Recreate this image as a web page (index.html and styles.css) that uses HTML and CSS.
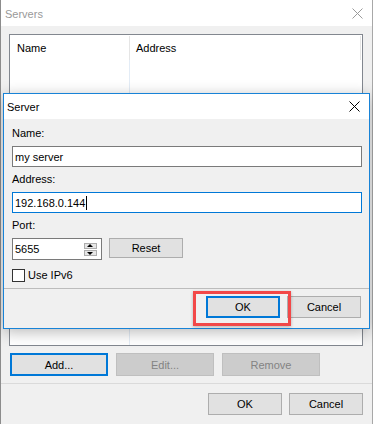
FILE: index.html
```html
<!DOCTYPE html>
<html lang="en">

<head>
    <meta charset="UTF-8">
    <title>Servers</title>
    <link rel="stylesheet" href="styles.css">
</head>

<body>

    <div class="window">
        <div class="titlebar inactive">
            <span class="title">Servers</span>
            <svg class="close" width="11" height="11" viewBox="0 0 11 11">
                <path d="M0.5 0.5 L10.5 10.5 M10.5 0.5 L0.5 10.5" stroke="#9a9a9a" stroke-width="1" fill="none" />
            </svg>
        </div>

        <div class="window-body">
            <div class="listview">
                <div class="list-header">
                    <div class="col col-name">Name</div>
                    <div class="col col-address">Address</div>
                    <div class="col col-rest"></div>
                </div>
                <div class="list-rows">
                    <div class="grid-name"></div>
                    <div class="grid-address"></div>
                </div>
            </div>

            <div class="button-row">
                <button class="btn wide focused">Add...</button>
                <button class="btn wide" disabled>Edit...</button>
                <button class="btn wide" disabled>Remove</button>
            </div>
        </div>

        <div class="window-footer">
            <button class="btn">OK</button>
            <button class="btn">Cancel</button>
        </div>
    </div>

    <!-- the "Server" dialog sits on top of the list window -->
    <div class="dialog">
        <div class="titlebar">
            <span class="title">Server</span>
            <svg class="close" width="11" height="11" viewBox="0 0 11 11">
                <path d="M0.5 0.5 L10.5 10.5 M10.5 0.5 L0.5 10.5" stroke="#000" stroke-width="1" fill="none" />
            </svg>
        </div>

        <div class="dialog-body">
            <div class="label">Name:</div>
            <div class="field">my server</div>

            <div class="label">Address:</div>
            <div class="field active">192.168.0.144<span class="caret"></span></div>

            <div class="label">Port:</div>
            <div class="port-row">
                <div class="field port">
                    <span class="port-value">5655</span>
                    <div class="spinner">
                        <span class="spin up"></span>
                        <span class="spin down"></span>
                    </div>
                </div>
                <button class="btn reset">Reset</button>
            </div>

            <label class="check-row">
                <span class="checkbox"></span>
                <span>Use IPv6</span>
            </label>
        </div>

        <div class="dialog-footer">
            <span class="highlight">
                <button class="btn focused">OK</button>
            </span>
            <button class="btn">Cancel</button>
        </div>
    </div>

</body>

</html>
```

FILE: styles.css
```css
* {
    box-sizing: border-box;
}

html,
body {
    margin: 0;
    padding: 0;
    width: 373px;
    height: 424px;
    overflow: hidden;
    font-family: "Liberation Sans", Arial, sans-serif;
    font-size: 11px;
    color: #000;
    background: #f0f0f0;
}

body {
    position: relative;
}

/* outer "Servers" window */
.window {
    width: 373px;
    height: 424px;
    border-left: 1px solid #8c8c8c;
    border-right: 1px solid #a8a8a8;
    background: #f0f0f0;
    display: flex;
    flex-direction: column;
}

.titlebar {
    height: 26px;
    background: #fff;
    display: flex;
    align-items: center;
    justify-content: space-between;
    padding: 0 9px 0 4px;
    flex-shrink: 0;
}

.titlebar .title {
    font-size: 11px;
    padding-top: 1px;
}

.titlebar.inactive .title {
    color: #999;
}

.window-body {
    padding: 8px 9px 0 8px;
    border-bottom: 1px solid #dadada;
}

.listview {
    height: 312px;
    border: 1px solid #82878f;
    background: #fff;
    display: flex;
    flex-direction: column;
}

.list-header {
    display: flex;
    height: 25px;
    padding-top: 1px;
}

.col {
    display: flex;
    align-items: center;
    padding-left: 7px;
}

.col-name {
    width: 120px;
    border-right: 1px solid #e5e5e5;
}

.col-address {
    width: 231px;
    border-right: 1px solid #e5e5e5;
    padding-left: 6px;
}

.col-rest {
    flex: 1;
    padding: 0;
}

.list-rows {
    flex: 1;
    display: flex;
}

.grid-name {
    width: 120px;
    border-right: 1px solid #e3ecf6;
}

.button-row {
    display: flex;
    gap: 8px;
    padding: 7px 0 7px 1px;
}

.window-footer {
    display: flex;
    justify-content: flex-end;
    gap: 7px;
    padding: 9px 9px 0 0;
}

/* buttons */
.btn {
    width: 74px;
    height: 22px;
    margin: 0;
    padding: 0;
    font-family: inherit;
    font-size: 11px;
    color: #000;
    background: #e1e1e1;
    border: 1px solid #adadad;
    border-radius: 0;
}

.btn.wide {
    width: 98px;
    height: 23px;
}

.btn.focused {
    border: 2px solid #0078d7;
}

.btn:disabled {
    background: #cccccc;
    border-color: #bfbfbf;
    color: #838383;
}

/* "Server" dialog, floating over the list window */
.dialog {
    position: absolute;
    left: 3px;
    top: 93px;
    width: 367px;
    height: 236px;
    border: 1px solid #1883d7;
    background: #f0f0f0;
    box-shadow: 0 3px 14px rgba(0, 0, 0, 0.28);
    display: flex;
    flex-direction: column;
}

.dialog .titlebar {
    height: 25px;
    padding: 0 9px 0 3px;
}

.dialog-body {
    height: 170px;
    padding: 8px 7px 0 8px;
    border-bottom: 1px solid #bcbcbc;
}

.label {
    height: 13px;
    line-height: 13px;
    margin-bottom: 6px;
}

.field {
    height: 21px;
    margin-bottom: 6px;
    background: #fff;
    border: 1px solid #7a7a7a;
    padding-left: 2px;
    display: flex;
    align-items: center;
}

.field.active {
    border-color: #0078d7;
}

.caret {
    display: inline-block;
    width: 1px;
    height: 14px;
    background: #000;
    margin-left: 1px;
}

.port-row {
    display: flex;
    gap: 7px;
    align-items: flex-start;
}

.field.port {
    width: 90px;
    height: 22px;
    margin-bottom: 0;
    justify-content: space-between;
    padding-right: 4px;
}

.spinner {
    display: flex;
    flex-direction: column;
    gap: 1px;
}

.spin {
    position: relative;
    width: 13px;
    height: 6px;
    background: #e6e6e6;
    border: 1px solid #adadad;
}

.spin::after {
    content: "";
    position: absolute;
    left: 2px;
    width: 0;
    height: 0;
    border-left: 3.5px solid transparent;
    border-right: 3.5px solid transparent;
}

.spin.up::after {
    top: 0;
    border-bottom: 3px solid #000;
}

.spin.down::after {
    top: 1px;
    border-top: 3px solid #000;
}

.btn.reset {
    height: 20px;
    margin-top: 0;
}

.check-row {
    display: flex;
    align-items: center;
    gap: 3px;
    margin-top: 8px;
    height: 14px;
}

.checkbox {
    width: 13px;
    height: 13px;
    background: #fff;
    border: 1px solid #333;
}

.dialog-footer {
    flex: 1;
    display: flex;
    justify-content: flex-end;
    gap: 7px;
    padding: 7px 8px 0 0;
}

.highlight {
    position: relative;
    display: block;
    height: 22px;
}

/* red annotation frame round the OK button */
.highlight::after {
    content: "";
    position: absolute;
    left: -13px;
    right: -11px;
    top: -5px;
    bottom: -8px;
    border: 3px solid #f24848;
    box-shadow: 0 1px 3px rgba(0, 0, 0, 0.25);
}
```
